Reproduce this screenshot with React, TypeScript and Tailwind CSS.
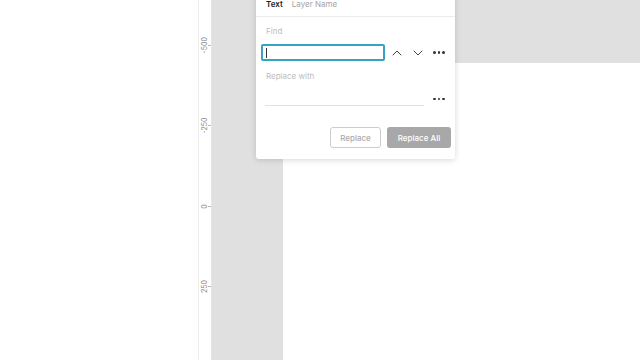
import React from "react";

const ticks = [
  { label: "-500", y: 45 },
  { label: "-250", y: 125 },
  { label: "0", y: 206 },
  { label: "250", y: 286 },
  { label: "500", y: 366 },
];

const Dots: React.FC = () => (
  <div className="flex items-center gap-[2px] w-[16px] justify-center">
    <span className="w-[2.5px] h-[2.5px] rounded-full bg-[#333]" />
    <span className="w-[2.5px] h-[2.5px] rounded-full bg-[#333]" />
    <span className="w-[2.5px] h-[2.5px] rounded-full bg-[#333]" />
  </div>
);

const Chevron: React.FC<{ up?: boolean }> = ({ up }) => (
  <svg width="16" height="12" viewBox="0 0 16 12" fill="none">
    <polyline
      points={up ? "4,8 8,4 12,8" : "4,4 8,8 12,4"}
      stroke="#444"
      strokeWidth="1"
      strokeLinecap="round"
      strokeLinejoin="round"
    />
  </svg>
);

export default function App() {
  return (
    <div
      className="relative w-[640px] h-[360px] overflow-hidden bg-white flex"
      style={{ fontFamily: "Inter, 'Liberation Sans', sans-serif" }}
    >
      {/* page left of the ruler */}
      <div className="w-[198px] shrink-0 bg-white" />

      {/* vertical ruler */}
      <div className="relative w-[14px] shrink-0 bg-white border-l border-[#ececec] border-r border-r-[#e4e4e4]">
        {ticks.map((t) => (
          <div key={t.label}>
            <div
              className="absolute left-[-3px] w-[16px] text-center text-[7px] leading-none text-[#8a8a8a] -rotate-90"
              style={{ top: t.y - 3.5 }}
            >
              {t.label}
            </div>
            <div
              className="absolute right-0 w-[3px] h-px bg-[#b5b5b5]"
              style={{ top: t.y }}
            />
          </div>
        ))}
      </div>

      {/* workspace */}
      <div className="flex-1 bg-[#e0e0e0] pl-[71px] pt-[63px] flex">
        <div className="flex-1 bg-white" />
      </div>

      {/* find & replace panel */}
      <div className="absolute left-[256px] top-[-8px] w-[199px] bg-white rounded-b-[3px] shadow-[0_1px_6px_rgba(0,0,0,0.16)] text-[8px]">
        <div className="h-[25px] flex items-center gap-[9px] px-[10px] border-b border-[#ececec]">
          <span className="font-semibold text-[#222]">Text</span>
          <span className="text-[#a3a3a3]">Layer Name</span>
        </div>

        <div className="px-[5px] pt-[9px] pb-[11px]">
          <div className="pl-[5px] text-[#bdbdbd] leading-[10px]">Find</div>
          <div className="mt-[8px] flex items-center">
            <div className="w-[124px] h-[17px] border-2 border-[#38a2c6] rounded-[2px] flex items-center pl-[3px]">
              <span className="w-px h-[10px] bg-[#333]" />
            </div>
            <div className="ml-[4px] flex items-center gap-[5px]">
              <Chevron up />
              <Chevron />
              <Dots />
            </div>
          </div>

          <div className="mt-[10px] pl-[5px] text-[#bdbdbd] leading-[10px]">Replace with</div>
          <div className="mt-[8px] flex items-end">
            <div className="ml-[4px] w-[159px] h-[17px] border-b border-[#e2e2e2]" />
            <div className="ml-[7px] mb-[6px]">
              <Dots />
            </div>
          </div>

          <div className="mt-[21px] flex justify-end gap-[6px] mr-[-1px]">
            <button className="w-[51px] h-[21px] rounded-[3px] border border-[#cdcdcd] bg-white text-[#ababab] font-medium">
              Replace
            </button>
            <button className="w-[64px] h-[21px] rounded-[3px] bg-[#a8a8a8] text-white font-medium">
              Replace All
            </button>
          </div>
        </div>
      </div>
    </div>
  );
}
